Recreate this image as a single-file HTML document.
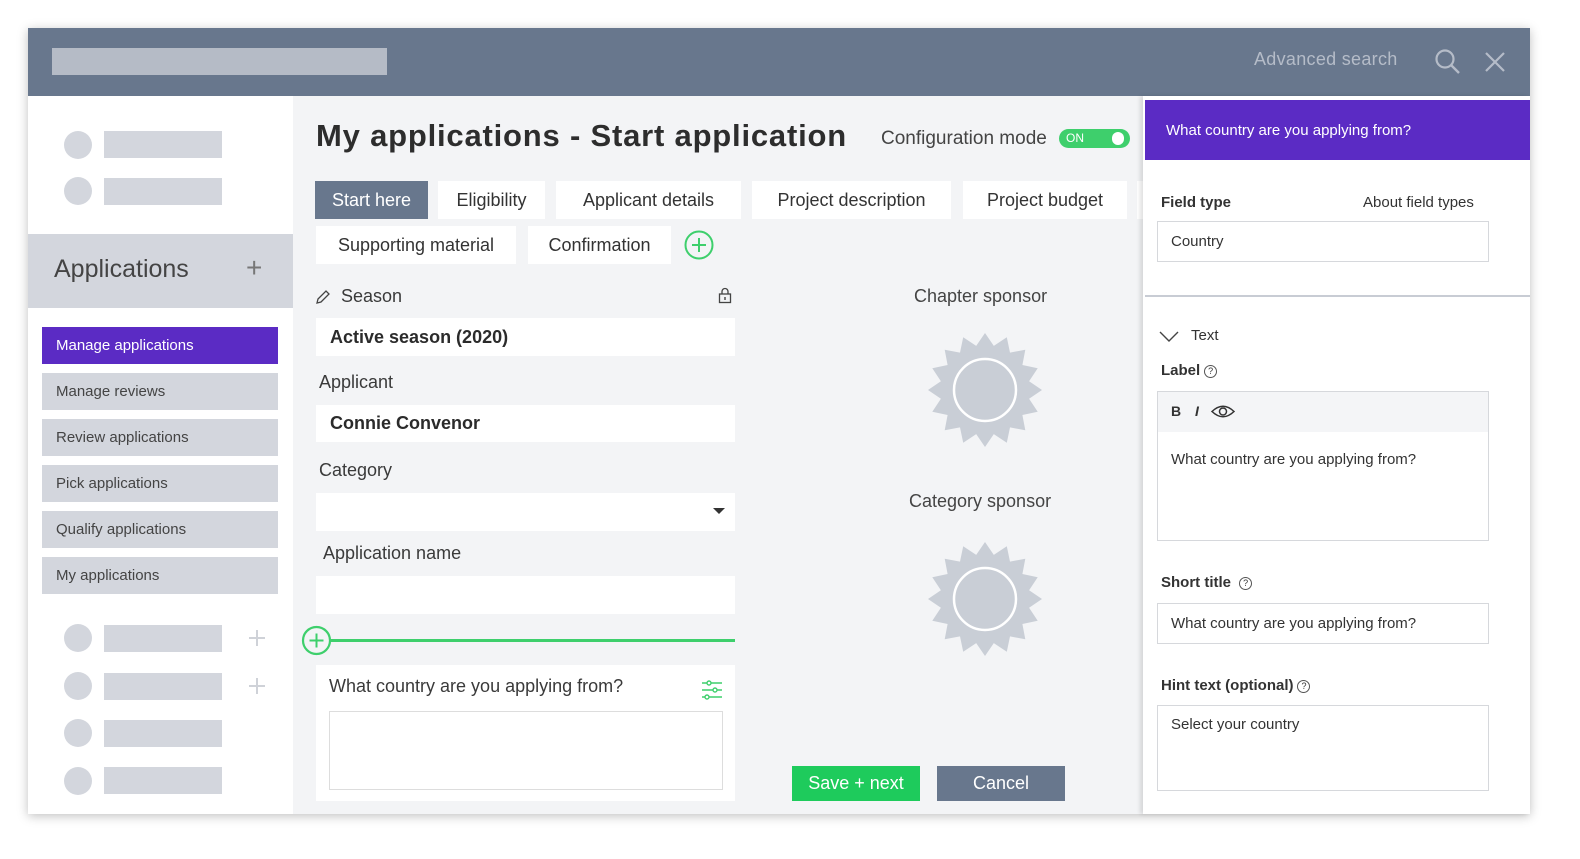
<!DOCTYPE html>
<html><head><meta charset="utf-8"><style>
*{box-sizing:border-box;margin:0;padding:0}
body{width:1580px;height:859px;background:#fff;position:relative;overflow:hidden;font-family:"Liberation Sans",sans-serif;color:#333}
.a{position:absolute}
.win{left:28px;top:28px;width:1502px;height:786px;background:#f3f4f6;box-shadow:0 2px 10px rgba(0,0,0,.25)}
.t{position:absolute;white-space:nowrap}
.gr{background:#d3d6dd}
.circ{position:absolute;width:28px;height:28px;border-radius:50%;background:#d3d6dd}
.nav{position:absolute;left:42px;width:236px;height:37px;background:#d3d6dd;color:#444;font-size:15px;line-height:37px;padding-left:14px}
.tab{position:absolute;height:38px;background:#fff;font-size:18px;line-height:38px;text-align:center;color:#333}
.inp{position:absolute;left:316px;width:419px;background:#fff;font-size:18px;font-weight:bold;color:#2b2b2b;padding-left:14px}
.lbl{position:absolute;font-size:18px;color:#3a3a3a}
.rin{position:absolute;left:1157px;width:332px;background:#fff;border:1px solid #d6d8dc;font-size:15px;color:#333;padding-left:13px}
.rl{position:absolute;left:1161px;font-size:15px;font-weight:bold;color:#333}
.q{display:inline-block;width:13px;height:13px;border:1px solid #555;border-radius:50%;font-size:9px;line-height:11px;text-align:center;font-weight:normal;vertical-align:1px;margin-left:4px}
</style></head><body>
<div class="a win"></div>
<div class="a" style="left:28px;top:28px;width:1502px;height:68px;background:#68778d"></div>
<div class="a" style="left:52px;top:48px;width:335px;height:27px;background:#b5bbc6"></div>
<div class="t" style="left:1254px;top:49px;font-size:18px;color:#b5bcc8;letter-spacing:.3px">Advanced search</div>
<svg class="a" style="left:1434px;top:48px" width="28" height="28"><circle cx="11" cy="11" r="8.5" fill="none" stroke="#b5bcc8" stroke-width="2.2"/><line x1="17" y1="17" x2="25" y2="25" stroke="#b5bcc8" stroke-width="2.4"/></svg>
<svg class="a" style="left:1484px;top:51px" width="22" height="22"><path d="M2 2L20 20M20 2L2 20" stroke="#b5bcc8" stroke-width="2.2"/></svg>
<div class="a" style="left:28px;top:96px;width:265px;height:718px;background:#fff"></div>
<div class="circ" style="left:64px;top:131px"></div><div class="a gr" style="left:104px;top:131px;width:118px;height:27px"></div>
<div class="circ" style="left:64px;top:177px"></div><div class="a gr" style="left:104px;top:178px;width:118px;height:27px"></div>
<div class="a gr" style="left:28px;top:234px;width:265px;height:74px"></div>
<div class="t" style="left:54px;top:255px;font-size:25px;color:#444">Applications</div>
<div class="t" style="left:246px;top:252px;font-size:28px;color:#777;font-weight:300">+</div>
<div class="nav" style="top:327px;background:#5b2bc4;color:#fff">Manage applications</div>
<div class="nav" style="top:373px">Manage reviews</div>
<div class="nav" style="top:419px">Review applications</div>
<div class="nav" style="top:465px">Pick applications</div>
<div class="nav" style="top:511px">Qualify applications</div>
<div class="nav" style="top:557px">My applications</div>
<div class="circ" style="left:64px;top:624px"></div><div class="a gr" style="left:104px;top:625px;width:118px;height:27px"></div>
<div class="circ" style="left:64px;top:672px"></div><div class="a gr" style="left:104px;top:673px;width:118px;height:27px"></div>
<div class="circ" style="left:64px;top:719px"></div><div class="a gr" style="left:104px;top:720px;width:118px;height:27px"></div>
<div class="circ" style="left:64px;top:767px"></div><div class="a gr" style="left:104px;top:767px;width:118px;height:27px"></div>
<svg class="a" style="left:248px;top:629px" width="18" height="18"><path d="M9 1V17M1 9H17" stroke="#cfd2d8" stroke-width="2"/></svg>
<svg class="a" style="left:248px;top:677px" width="18" height="18"><path d="M9 1V17M1 9H17" stroke="#cfd2d8" stroke-width="2"/></svg>
<div class="t" style="left:316px;top:118px;font-size:31px;font-weight:bold;color:#2d2d2d;letter-spacing:.8px">My applications - Start application</div>
<div class="t" style="left:881px;top:128px;font-size:19px;color:#444">Configuration mode</div>
<div class="a" style="left:1059px;top:129px;width:71px;height:19px;border-radius:10px;background:#3ecf6c"></div>
<div class="t" style="left:1066px;top:131px;font-size:12px;color:#fff">ON</div>
<div class="a" style="left:1112px;top:132px;width:12px;height:13px;border-radius:6px;background:#fff"></div>
<div class="tab" style="left:315px;top:181px;width:113px;background:#68778d;color:#fff">Start here</div>
<div class="tab" style="left:438px;top:181px;width:107px">Eligibility</div>
<div class="tab" style="left:556px;top:181px;width:185px">Applicant details</div>
<div class="tab" style="left:752px;top:181px;width:199px">Project description</div>
<div class="tab" style="left:963px;top:181px;width:164px">Project budget</div>
<div class="tab" style="left:1137px;top:181px;width:6px"></div>
<div class="tab" style="left:316px;top:226px;width:200px">Supporting material</div>
<div class="tab" style="left:528px;top:226px;width:143px">Confirmation</div>
<svg class="a" style="left:684px;top:230px" width="30" height="30"><circle cx="15" cy="15" r="13.5" fill="none" stroke="#3ecf6c" stroke-width="2"/><path d="M15 8V22M8 15H22" stroke="#3ecf6c" stroke-width="2"/></svg>
<svg class="a" style="left:314px;top:288px" width="18" height="18"><path d="M3 15L4 11L12 3L15 6L7 14Z" fill="none" stroke="#444" stroke-width="1.3"/></svg>
<div class="lbl" style="left:341px;top:286px">Season</div>
<svg class="a" style="left:718px;top:287px" width="14" height="17"><path d="M4 7V4.5a3 3 0 0 1 6 0V7" fill="none" stroke="#444" stroke-width="1.3"/><rect x="1.5" y="7" width="11" height="8.5" fill="none" stroke="#444" stroke-width="1.3"/><rect x="6.3" y="10" width="1.4" height="3" fill="#444"/></svg>
<div class="inp" style="top:318px;height:38px;line-height:38px">Active season (2020)</div>
<div class="lbl" style="left:319px;top:372px">Applicant</div>
<div class="inp" style="top:405px;height:37px;line-height:37px">Connie Convenor</div>
<div class="lbl" style="left:319px;top:460px">Category</div>
<div class="inp" style="top:493px;height:38px"></div>
<svg class="a" style="left:713px;top:508px" width="12" height="8"><path d="M0 0H12L6 6Z" fill="#333"/></svg>
<div class="lbl" style="left:323px;top:543px">Application name</div>
<div class="inp" style="top:576px;height:38px"></div>
<div class="a" style="left:316px;top:639px;width:419px;height:3px;background:#3ecf6c"></div>
<svg class="a" style="left:301px;top:625px" width="31" height="31"><circle cx="15.5" cy="15.5" r="13.5" fill="#f3f4f6" stroke="#3ecf6c" stroke-width="2.2"/><path d="M15.5 8.5V22.5M8.5 15.5H22.5" stroke="#3ecf6c" stroke-width="2"/></svg>
<div class="a" style="left:316px;top:665px;width:419px;height:136px;background:#fff"></div>
<div class="lbl" style="left:329px;top:676px">What country are you applying from?</div>
<svg class="a" style="left:700px;top:678px" width="24" height="24" fill="none" stroke="#3ecf6c" stroke-width="1.4"><path d="M2 5H7M11 5H22M2 12H13M17 12H22M2 19H5M9 19H22"/><circle cx="9" cy="5" r="2"/><circle cx="15" cy="12" r="2"/><circle cx="7" cy="19" r="2"/></svg>
<div class="a" style="left:329px;top:711px;width:394px;height:79px;border:1px solid #ddd;background:#fff"></div>
<div class="t" style="left:914px;top:286px;font-size:18px;color:#444">Chapter sponsor</div>
<div class="t" style="left:909px;top:491px;font-size:18px;color:#444">Category sponsor</div>
<svg class="a" style="left:925px;top:330px" width="120" height="120"><polygon class="star" fill="#c9ced6"/><circle cx="60" cy="60" r="31" fill="#c9ced6" stroke="#fff" stroke-width="2.5"/></svg>
<svg class="a" style="left:925px;top:539px" width="120" height="120"><polygon class="star" fill="#c9ced6"/><circle cx="60" cy="60" r="31" fill="#c9ced6" stroke="#fff" stroke-width="2.5"/></svg>
<div class="a" style="left:792px;top:766px;width:128px;height:35px;background:#1ecb5c;color:#fff;font-size:18px;line-height:35px;text-align:center">Save + next</div>
<div class="a" style="left:937px;top:766px;width:128px;height:35px;background:#68778d;color:#fff;font-size:18px;line-height:35px;text-align:center">Cancel</div>
<div class="a" style="left:1143px;top:96px;width:387px;height:718px;background:#fff;box-shadow:-3px 0 4px rgba(0,0,0,.12)"></div>
<div class="a" style="left:1145px;top:100px;width:385px;height:60px;background:#5b2bc4"></div>
<div class="t" style="left:1166px;top:122px;font-size:15px;color:#fff">What country are you applying from?</div>
<div class="rl" style="top:194px">Field type</div>
<div class="t" style="left:1363px;top:194px;font-size:15px;color:#333">About field types</div>
<div class="rin" style="top:221px;height:41px;line-height:39px">Country</div>
<div class="a" style="left:1145px;top:295px;width:385px;height:2px;background:#c8ccd4"></div>
<svg class="a" style="left:1159px;top:331px" width="20" height="12"><path d="M1 1L10 10L19 1" fill="none" stroke="#444" stroke-width="1.4"/></svg>
<div class="t" style="left:1191px;top:327px;font-size:15px;color:#333">Text</div>
<div class="rl" style="top:362px">Label<span class="q">?</span></div>
<div class="rin" style="top:391px;height:150px;padding:0"><div style="height:40px;background:#f4f5f7"></div></div>
<div class="t" style="left:1171px;top:403px;font-size:14px;font-weight:bold;color:#333">B</div>
<div class="t" style="left:1195px;top:403px;font-size:14px;font-weight:bold;font-style:italic;color:#333">I</div>
<svg class="a" style="left:1211px;top:404px" width="24" height="15" fill="none" stroke="#333" stroke-width="1.5"><path d="M1 7.5Q12 -3 23 7.5Q12 18 1 7.5Z"/><circle cx="12" cy="7.5" r="3.5"/></svg>
<div class="t" style="left:1171px;top:451px;font-size:15px;color:#333">What country are you applying from?</div>
<div class="rl" style="top:574px">Short title <span class="q">?</span></div>
<div class="rin" style="top:603px;height:41px;line-height:39px">What country are you applying from?</div>
<div class="rl" style="top:677px">Hint text (optional)<span class="q">?</span></div>
<div class="rin" style="top:705px;height:86px;padding-top:10px">Select your country</div>
<script>
var p=[];for(var i=0;i<32;i++){var a=i*Math.PI/16-Math.PI/2,r=i%2?45:57;p.push((60+r*Math.cos(a)).toFixed(1)+","+(60+r*Math.sin(a)).toFixed(1));}
document.querySelectorAll('.star').forEach(function(e){e.setAttribute('points',p.join(' '))});
</script>
</body></html>
